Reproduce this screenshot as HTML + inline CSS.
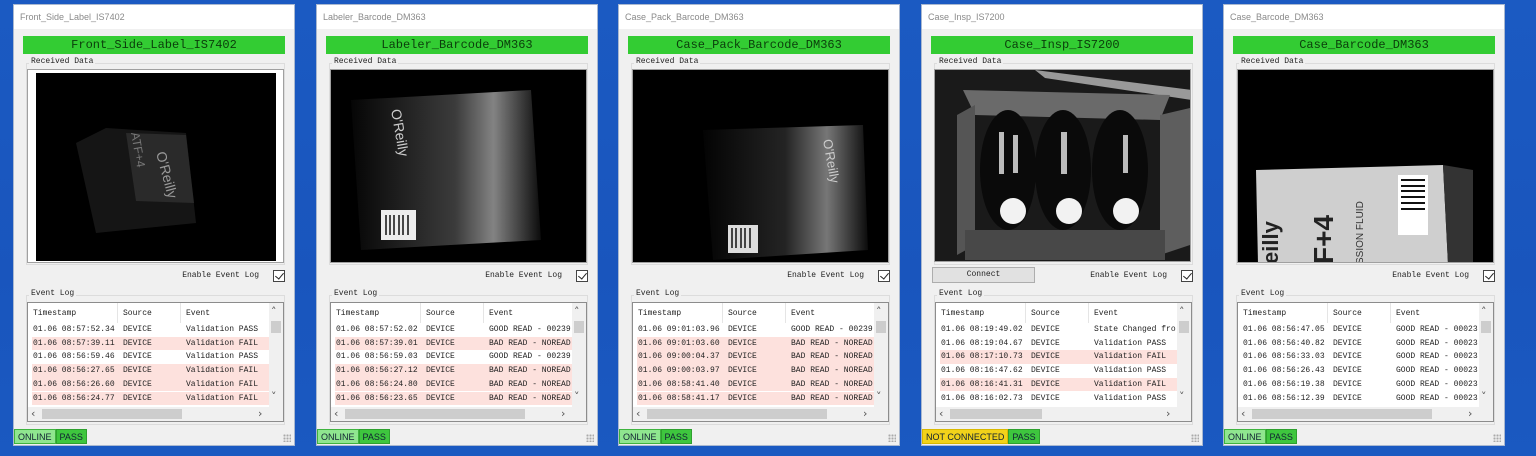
<!DOCTYPE html>
<html><head><meta charset="utf-8"><style>
*{margin:0;padding:0;box-sizing:border-box}
body{width:1536px;height:456px;overflow:hidden;position:relative;background:linear-gradient(180deg,#1b5ac2 0%,#1955bd 60%,#1a59c1 100%);font-family:"Liberation Mono",monospace}
.w{position:absolute;top:4px;width:282px;height:442px;background:#f0f0f0;border:1px solid #a9b8d0}
.tb{position:absolute;left:0;top:0;width:280px;height:24px;background:#fff;font:9px "Liberation Sans",sans-serif;color:#8a8a8a;padding:7px 6px}
.hd{position:absolute;left:9px;top:31px;width:262px;height:18px;background:#33cc33;color:#0b3d0b;font-size:12px;text-align:center;line-height:18px}
.gl{position:absolute;font-size:8px;color:#222;background:#f0f0f0;padding:0 2px}
.gf{position:absolute;border:1px solid #dcdcdc}
.img{position:absolute;left:13px;top:64px;width:257px;height:194px;background:#000;border:1px solid #a0a0a0;overflow:hidden}
.en{position:absolute;top:266px;right:35px;font-size:8px;color:#222}
.cb{position:absolute;left:259px;top:265px;width:12px;height:12px;border:1px solid #444;background:#fff}
.cb:after{content:"";position:absolute;left:3px;top:0px;width:4px;height:7px;border-right:1px solid #222;border-bottom:1px solid #222;transform:rotate(40deg)}
.lv{position:absolute;left:13px;top:297px;width:257px;height:120px;background:#fff;border:1px solid #8c8c8c;overflow:hidden;font-size:8px;color:#222}
.lh{position:absolute;left:0;top:0;width:241px;height:20px;background:#fff}
.lh span,.r span{position:absolute;white-space:nowrap}
.lh span{top:6px}
.sep{position:absolute;top:0;width:1px;height:20px;background:#e5e5e5}
.r{position:absolute;left:4px;width:237px;height:13.7px}
.r span{top:2px}
.p{background:#fde1dd}
.vs{position:absolute;right:0;top:0;width:14px;height:104px;background:#f0f0f0}
.vs i{position:absolute;left:2px;top:18px;width:10px;height:12px;background:#cdcdcd}
.ar{position:absolute;font-size:11px;color:#555;font-family:"DejaVu Sans",sans-serif;line-height:12px}
.hs{position:absolute;left:0;bottom:0;width:255px;height:14px;background:#f0f0f0}
.hs i{position:absolute;left:14px;top:2px;width:140px;height:10px;background:#cdcdcd}
.st{position:absolute;left:0;top:424px;height:15px;font:9px "Liberation Sans",sans-serif;color:#123}
.st span{display:inline-block;height:15px;line-height:15px;padding:0 3px;border:1px solid #3fb33f;background:#8fe68f}
.st span.g{background:#3ec63e;border-color:#2fa02f}
.st span.y{background:#f2d21a;border-color:#d9b800}
.grip{position:absolute;right:3px;bottom:3px;width:8px;height:8px;background:radial-gradient(circle,#aaa 1px,transparent 1.2px) 0 0/3px 3px}
.btn{position:absolute;left:10px;top:262px;width:103px;height:16px;background:#e1e1e1;border:1px solid #adadad;font-size:8px;text-align:center;line-height:14px;color:#222}
</style></head><body>

<!-- Window 1 -->
<div class="w" style="left:13px">
<div class="tb">Front_Side_Label_IS7402</div>
<div class="hd">Front_Side_Label_IS7402</div>
<div class="gf" style="left:12px;top:58px;width:259px;height:202px"></div>
<div class="gl" style="left:15px;top:52px">Received Data</div>
<div class="img" style="background:#fff;padding:3px 8px"><svg width="240" height="188" viewBox="0 0 240 188" style="display:block;background:#000"><path d="M40 70 L70 55 L150 60 L160 150 L60 160 Z" fill="#151515"/><path d="M90 60 L150 62 L158 130 L100 128 Z" fill="#2a2a2a"/><text x="120" y="80" fill="#999" font-size="14" font-family="Liberation Sans" transform="rotate(75 120 80)">O'Reilly</text><text x="95" y="60" fill="#777" font-size="12" font-family="Liberation Sans" transform="rotate(80 95 60)">ATF+4</text></svg></div>
<div class="en">Enable Event Log</div><div class="cb"></div>
<div class="gf" style="left:12px;top:290px;width:259px;height:130px"></div>
<div class="gl" style="left:15px;top:284px">Event Log</div>
<div class="lv">
<div class="lh"><span style="left:5px">Timestamp</span><span style="left:95px">Source</span><span style="left:158px">Event</span><div class="sep" style="left:89px"></div><div class="sep" style="left:152px"></div></div>
<div class="r" style="top:20px"><span style="left:1px">01.06 08:57:52.34</span><span style="left:91px">DEVICE</span><span style="left:154px">Validation PASS</span></div>
<div class="r p" style="top:33.7px"><span style="left:1px">01.06 08:57:39.11</span><span style="left:91px">DEVICE</span><span style="left:154px">Validation FAIL</span></div>
<div class="r" style="top:47.4px"><span style="left:1px">01.06 08:56:59.46</span><span style="left:91px">DEVICE</span><span style="left:154px">Validation PASS</span></div>
<div class="r p" style="top:61.1px"><span style="left:1px">01.06 08:56:27.65</span><span style="left:91px">DEVICE</span><span style="left:154px">Validation FAIL</span></div>
<div class="r p" style="top:74.8px"><span style="left:1px">01.06 08:56:26.60</span><span style="left:91px">DEVICE</span><span style="left:154px">Validation FAIL</span></div>
<div class="r p" style="top:88.5px"><span style="left:1px">01.06 08:56:24.77</span><span style="left:91px">DEVICE</span><span style="left:154px">Validation FAIL</span></div>
<div class="vs"><span class="ar" style="left:2px;top:3px">˄</span><i></i><span class="ar" style="left:2px;top:88px">˅</span></div>
<div class="hs"><span class="ar" style="left:3px;top:1px">‹</span><i></i><span class="ar" style="left:230px;top:1px">›</span></div>
</div>
<div class="st"><span>ONLINE</span><span class="g">PASS</span></div><div class="grip"></div>
</div>

<!-- Window 2 -->
<div class="w" style="left:316px">
<div class="tb">Labeler_Barcode_DM363</div>
<div class="hd">Labeler_Barcode_DM363</div>
<div class="gf" style="left:12px;top:58px;width:259px;height:202px"></div>
<div class="gl" style="left:15px;top:52px">Received Data</div>
<div class="img"><svg width="257" height="194" viewBox="0 0 257 194" style="display:block"><defs><linearGradient id="a" x1="0" x2="1"><stop offset="0" stop-color="#080808"/><stop offset=".55" stop-color="#555"/><stop offset=".75" stop-color="#bbb"/><stop offset="1" stop-color="#111"/></linearGradient></defs><path d="M20 30 L200 20 L210 170 L30 180 Z" fill="url(#a)" opacity=".7"/><rect x="50" y="140" width="35" height="30" fill="#eee"/><g stroke="#111" stroke-width="1.5"><path d="M55 145v20M59 145v20M63 145v20M68 145v20M72 145v20M77 145v20"/></g><text x="60" y="40" fill="#ccc" font-size="14" font-family="Liberation Sans" transform="rotate(80 60 40)">O'Reilly</text></svg></div>
<div class="en">Enable Event Log</div><div class="cb"></div>
<div class="gf" style="left:12px;top:290px;width:259px;height:130px"></div>
<div class="gl" style="left:15px;top:284px">Event Log</div>
<div class="lv">
<div class="lh"><span style="left:5px">Timestamp</span><span style="left:95px">Source</span><span style="left:158px">Event</span><div class="sep" style="left:89px"></div><div class="sep" style="left:152px"></div></div>
<div class="r" style="top:20px"><span style="left:1px">01.06 08:57:52.02</span><span style="left:91px">DEVICE</span><span style="left:154px">GOOD READ - 00239</span></div>
<div class="r p" style="top:33.7px"><span style="left:1px">01.06 08:57:39.01</span><span style="left:91px">DEVICE</span><span style="left:154px">BAD READ - NOREAD</span></div>
<div class="r" style="top:47.4px"><span style="left:1px">01.06 08:56:59.03</span><span style="left:91px">DEVICE</span><span style="left:154px">GOOD READ - 00239</span></div>
<div class="r p" style="top:61.1px"><span style="left:1px">01.06 08:56:27.12</span><span style="left:91px">DEVICE</span><span style="left:154px">BAD READ - NOREAD</span></div>
<div class="r p" style="top:74.8px"><span style="left:1px">01.06 08:56:24.80</span><span style="left:91px">DEVICE</span><span style="left:154px">BAD READ - NOREAD</span></div>
<div class="r p" style="top:88.5px"><span style="left:1px">01.06 08:56:23.65</span><span style="left:91px">DEVICE</span><span style="left:154px">BAD READ - NOREAD</span></div>
<div class="vs"><span class="ar" style="left:2px;top:3px">˄</span><i></i><span class="ar" style="left:2px;top:88px">˅</span></div>
<div class="hs"><span class="ar" style="left:3px;top:1px">‹</span><i style="width:180px"></i><span class="ar" style="left:230px;top:1px">›</span></div>
</div>
<div class="st"><span>ONLINE</span><span class="g">PASS</span></div><div class="grip"></div>
</div>

<!-- Window 3 -->
<div class="w" style="left:618px">
<div class="tb">Case_Pack_Barcode_DM363</div>
<div class="hd">Case_Pack_Barcode_DM363</div>
<div class="gf" style="left:12px;top:58px;width:259px;height:202px"></div>
<div class="gl" style="left:15px;top:52px">Received Data</div>
<div class="img"><svg width="257" height="194" viewBox="0 0 257 194" style="display:block"><defs><linearGradient id="b" x1="0" x2="1"><stop offset="0" stop-color="#050505"/><stop offset=".5" stop-color="#333"/><stop offset=".75" stop-color="#aaa"/><stop offset="1" stop-color="#111"/></linearGradient></defs><path d="M70 60 L230 55 L235 180 L80 190 Z" fill="url(#b)" opacity=".7"/><rect x="95" y="155" width="30" height="28" fill="#ddd"/><g stroke="#111" stroke-width="1.5"><path d="M99 158v20M103 158v20M108 158v20M112 158v20M117 158v20"/></g><text x="190" y="70" fill="#ccc" font-size="13" font-family="Liberation Sans" transform="rotate(80 190 70)">O'Reilly</text></svg></div>
<div class="en">Enable Event Log</div><div class="cb"></div>
<div class="gf" style="left:12px;top:290px;width:259px;height:130px"></div>
<div class="gl" style="left:15px;top:284px">Event Log</div>
<div class="lv">
<div class="lh"><span style="left:5px">Timestamp</span><span style="left:95px">Source</span><span style="left:158px">Event</span><div class="sep" style="left:89px"></div><div class="sep" style="left:152px"></div></div>
<div class="r" style="top:20px"><span style="left:1px">01.06 09:01:03.96</span><span style="left:91px">DEVICE</span><span style="left:154px">GOOD READ - 00239</span></div>
<div class="r p" style="top:33.7px"><span style="left:1px">01.06 09:01:03.60</span><span style="left:91px">DEVICE</span><span style="left:154px">BAD READ - NOREAD</span></div>
<div class="r p" style="top:47.4px"><span style="left:1px">01.06 09:00:04.37</span><span style="left:91px">DEVICE</span><span style="left:154px">BAD READ - NOREAD</span></div>
<div class="r p" style="top:61.1px"><span style="left:1px">01.06 09:00:03.97</span><span style="left:91px">DEVICE</span><span style="left:154px">BAD READ - NOREAD</span></div>
<div class="r p" style="top:74.8px"><span style="left:1px">01.06 08:58:41.40</span><span style="left:91px">DEVICE</span><span style="left:154px">BAD READ - NOREAD</span></div>
<div class="r p" style="top:88.5px"><span style="left:1px">01.06 08:58:41.17</span><span style="left:91px">DEVICE</span><span style="left:154px">BAD READ - NOREAD</span></div>
<div class="vs"><span class="ar" style="left:2px;top:3px">˄</span><i></i><span class="ar" style="left:2px;top:88px">˅</span></div>
<div class="hs"><span class="ar" style="left:3px;top:1px">‹</span><i style="width:180px"></i><span class="ar" style="left:230px;top:1px">›</span></div>
</div>
<div class="st"><span>ONLINE</span><span class="g">PASS</span></div><div class="grip"></div>
</div>

<!-- Window 4 -->
<div class="w" style="left:921px">
<div class="tb">Case_Insp_IS7200</div>
<div class="hd">Case_Insp_IS7200</div>
<div class="gf" style="left:12px;top:58px;width:259px;height:202px"></div>
<div class="gl" style="left:15px;top:52px">Received Data</div>
<div class="img" style="left:12px;top:64px;height:193px"><svg width="257" height="193" viewBox="0 0 257 193" style="display:block"><rect x="0" y="0" width="257" height="193" fill="#1a1a1a"/><path d="M100 0 L257 20 L257 30 L110 8Z" fill="#999"/><path d="M28 20 L235 25 L225 50 L40 45Z" fill="#6a6a6a"/><path d="M22 45 L40 35 L40 175 L22 185Z" fill="#555"/><path d="M225 45 L255 38 L255 175 L225 185Z" fill="#5e5e5e"/><path d="M30 160 L230 160 L230 190 L30 190Z" fill="#484848"/><g fill="#0a0a0a"><ellipse cx="73" cy="100" rx="28" ry="60"/><ellipse cx="128" cy="100" rx="28" ry="60"/><ellipse cx="185" cy="100" rx="28" ry="60"/></g><g fill="#bbb"><rect x="64" y="62" width="5" height="42"/><rect x="78" y="65" width="5" height="38"/><rect x="126" y="62" width="6" height="42"/><rect x="188" y="65" width="5" height="38"/></g><g fill="#f2f2f2"><circle cx="78" cy="141" r="13"/><circle cx="134" cy="141" r="13"/><circle cx="191" cy="141" r="13"/></g></svg></div>
<div class="btn">Connect</div>
<div class="en">Enable Event Log</div><div class="cb"></div>
<div class="gf" style="left:12px;top:290px;width:259px;height:130px"></div>
<div class="gl" style="left:15px;top:284px">Event Log</div>
<div class="lv">
<div class="lh"><span style="left:5px">Timestamp</span><span style="left:95px">Source</span><span style="left:158px">Event</span><div class="sep" style="left:89px"></div><div class="sep" style="left:152px"></div></div>
<div class="r" style="top:20px"><span style="left:1px">01.06 08:19:49.02</span><span style="left:91px">DEVICE</span><span style="left:154px">State Changed fro</span></div>
<div class="r" style="top:33.7px"><span style="left:1px">01.06 08:19:04.67</span><span style="left:91px">DEVICE</span><span style="left:154px">Validation PASS</span></div>
<div class="r p" style="top:47.4px"><span style="left:1px">01.06 08:17:10.73</span><span style="left:91px">DEVICE</span><span style="left:154px">Validation FAIL</span></div>
<div class="r" style="top:61.1px"><span style="left:1px">01.06 08:16:47.62</span><span style="left:91px">DEVICE</span><span style="left:154px">Validation PASS</span></div>
<div class="r p" style="top:74.8px"><span style="left:1px">01.06 08:16:41.31</span><span style="left:91px">DEVICE</span><span style="left:154px">Validation FAIL</span></div>
<div class="r" style="top:88.5px"><span style="left:1px">01.06 08:16:02.73</span><span style="left:91px">DEVICE</span><span style="left:154px">Validation PASS</span></div>
<div class="vs"><span class="ar" style="left:2px;top:3px">˄</span><i></i><span class="ar" style="left:2px;top:88px">˅</span></div>
<div class="hs"><span class="ar" style="left:3px;top:1px">‹</span><i style="width:92px"></i><span class="ar" style="left:230px;top:1px">›</span></div>
</div>
<div class="st"><span class="y">NOT CONNECTED</span><span class="g">PASS</span></div><div class="grip"></div>
</div>

<!-- Window 5 -->
<div class="w" style="left:1223px">
<div class="tb">Case_Barcode_DM363</div>
<div class="hd">Case_Barcode_DM363</div>
<div class="gf" style="left:12px;top:58px;width:259px;height:202px"></div>
<div class="gl" style="left:15px;top:52px">Received Data</div>
<div class="img"><svg width="257" height="194" viewBox="0 0 257 194" style="display:block"><path d="M18 100 L205 95 L210 194 L20 194Z" fill="#cfcfcf"/><path d="M205 95 L235 100 L235 194 L210 194Z" fill="#333"/><rect x="160" y="105" width="30" height="60" fill="#fff"/><g stroke="#111" stroke-width="2"><path d="M163 110h24M163 116h24M163 121h24M163 127h24M163 133h24M163 139h24"/></g><text x="95" y="194" fill="#222" font-size="28" font-weight="bold" font-family="Liberation Sans" transform="rotate(-90 95 194)">F+4</text><text x="40" y="194" fill="#222" font-size="22" font-weight="bold" font-family="Liberation Sans" transform="rotate(-90 40 194)">eilly</text><text x="125" y="194" fill="#333" font-size="10" font-family="Liberation Sans" transform="rotate(-90 125 194)">SSION FLUID</text></svg></div>
<div class="en">Enable Event Log</div><div class="cb"></div>
<div class="gf" style="left:12px;top:290px;width:259px;height:130px"></div>
<div class="gl" style="left:15px;top:284px">Event Log</div>
<div class="lv">
<div class="lh"><span style="left:5px">Timestamp</span><span style="left:95px">Source</span><span style="left:158px">Event</span><div class="sep" style="left:89px"></div><div class="sep" style="left:152px"></div></div>
<div class="r" style="top:20px"><span style="left:1px">01.06 08:56:47.05</span><span style="left:91px">DEVICE</span><span style="left:154px">GOOD READ - 00023</span></div>
<div class="r" style="top:33.7px"><span style="left:1px">01.06 08:56:40.82</span><span style="left:91px">DEVICE</span><span style="left:154px">GOOD READ - 00023</span></div>
<div class="r" style="top:47.4px"><span style="left:1px">01.06 08:56:33.03</span><span style="left:91px">DEVICE</span><span style="left:154px">GOOD READ - 00023</span></div>
<div class="r" style="top:61.1px"><span style="left:1px">01.06 08:56:26.43</span><span style="left:91px">DEVICE</span><span style="left:154px">GOOD READ - 00023</span></div>
<div class="r" style="top:74.8px"><span style="left:1px">01.06 08:56:19.38</span><span style="left:91px">DEVICE</span><span style="left:154px">GOOD READ - 00023</span></div>
<div class="r" style="top:88.5px"><span style="left:1px">01.06 08:56:12.39</span><span style="left:91px">DEVICE</span><span style="left:154px">GOOD READ - 00023</span></div>
<div class="vs"><span class="ar" style="left:2px;top:3px">˄</span><i></i><span class="ar" style="left:2px;top:88px">˅</span></div>
<div class="hs"><span class="ar" style="left:3px;top:1px">‹</span><i style="width:180px"></i><span class="ar" style="left:230px;top:1px">›</span></div>
</div>
<div class="st"><span>ONLINE</span><span class="g">PASS</span></div><div class="grip"></div>
</div>

</body></html>
